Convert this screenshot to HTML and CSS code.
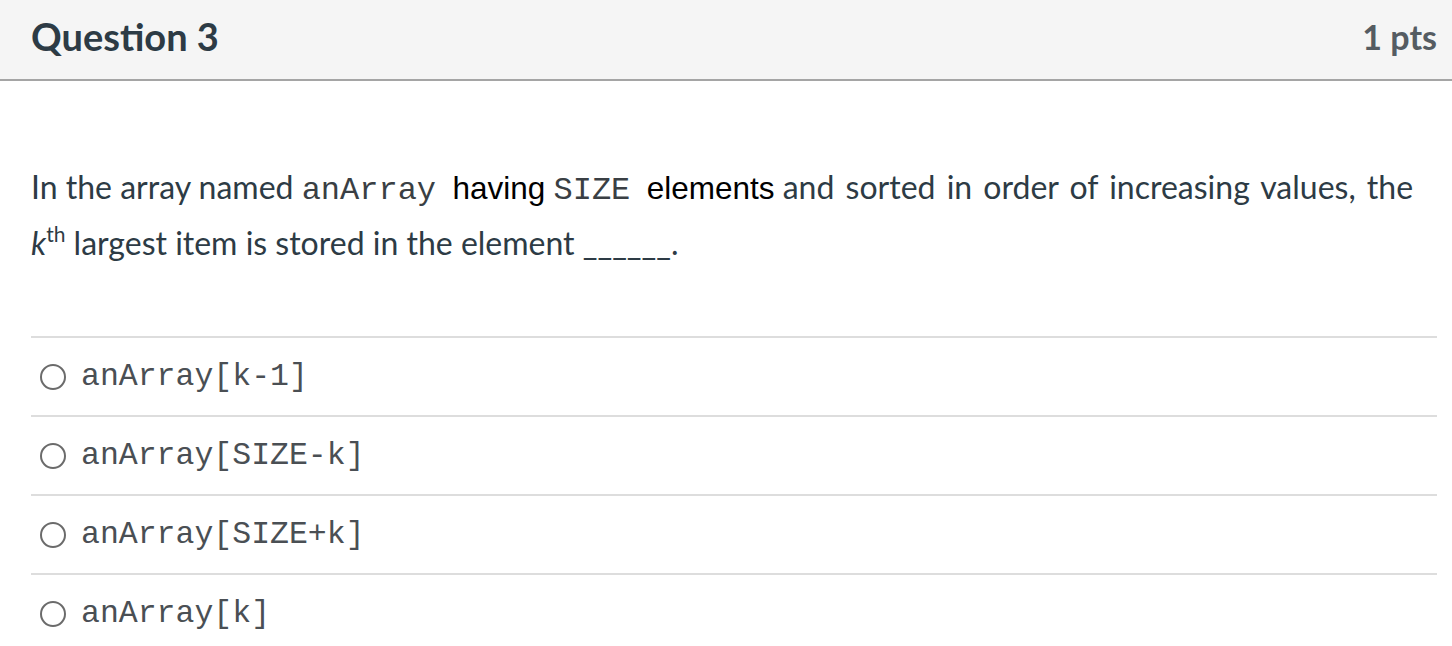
FILE: index.html
```html
<!DOCTYPE html>
<html>
<head>
<meta charset="utf-8">
<link rel="stylesheet" href="styles.css">
</head>
<body>
<div class="question">
  <div class="header">
    <h2 class="title">Question 3</h2>
    <div class="pts">1 pts</div>
  </div>
  <div class="content">
    <p class="text">In the array named <code>anArray</code>&nbsp; <span class="arial">having</span> <code>SIZE</code>&nbsp; <span class="arial">elements</span> <span class="wide">and sorted in order of increasing values, the</span> <i>k</i><sup>th</sup> largest item is stored in the element ______.</p>
    <div class="answers">
      <label class="answer"><span class="radio"></span><code class="ans">anArray[k-1]</code></label>
      <label class="answer"><span class="radio"></span><code class="ans">anArray[SIZE-k]</code></label>
      <label class="answer"><span class="radio"></span><code class="ans">anArray[SIZE+k]</code></label>
      <label class="answer"><span class="radio"></span><code class="ans">anArray[k]</code></label>
    </div>
  </div>
</div>
</body>
</html>
```
FILE: styles.css
```css
html, body {
  margin: 0;
  padding: 0;
  background: #ffffff;
}
body {
  font-family: Lato, "Open Sans", sans-serif;
  color: #2d3b45;
}
.header {
  display: flex;
  justify-content: space-between;
  align-items: center;
  height: 79px;
  background: #f5f5f5;
  border-bottom: 2px solid #a5a5a5;
  padding: 0 15px 0 31px;
}
.title {
  margin: 0;
  font-size: 38px;
  font-weight: 700;
  color: #2d3b45;
  padding-bottom: 8px;
}
.pts {
  font-size: 34px;
  font-weight: 700;
  color: #555c62;
  padding-bottom: 6px;
}
.content {
  padding: 0 15px 0 31px;
}
.text {
  margin: 0;
  padding-top: 80px;
  font-size: 32px;
  line-height: 52px;
  padding-bottom: 67px;
}
.wide {
  word-spacing: 3px;
}
.text code {
  font-family: "Courier New", Courier, "Nimbus Mono PS", FreeMono, "Liberation Mono", monospace;
  font-size: 32px;
  color: #3a3f44;
}
.arial {
  font-family: "Liberation Sans", Arial, sans-serif;
  color: #000000;
  font-size: 31.5px;
}
.text sup {
  font-size: 21px;
  line-height: 0;
  vertical-align: 13px;
}
.answers {
  display: flex;
  flex-direction: column;
}
.answer {
  display: flex;
  align-items: center;
  height: 77px;
  border-top: 2px solid #dddddd;
  padding-left: 9px;
}
.radio {
  width: 22px;
  height: 22px;
  border: 2px solid #6b6b6b;
  border-radius: 50%;
  margin-right: 15px;
  box-sizing: content-box;
  flex: none;
}
.ans {
  font-family: "Courier New", Courier, "Nimbus Mono PS", FreeMono, "Liberation Mono", monospace;
  font-size: 31.5px;
  color: #4a4f54;
}
```
